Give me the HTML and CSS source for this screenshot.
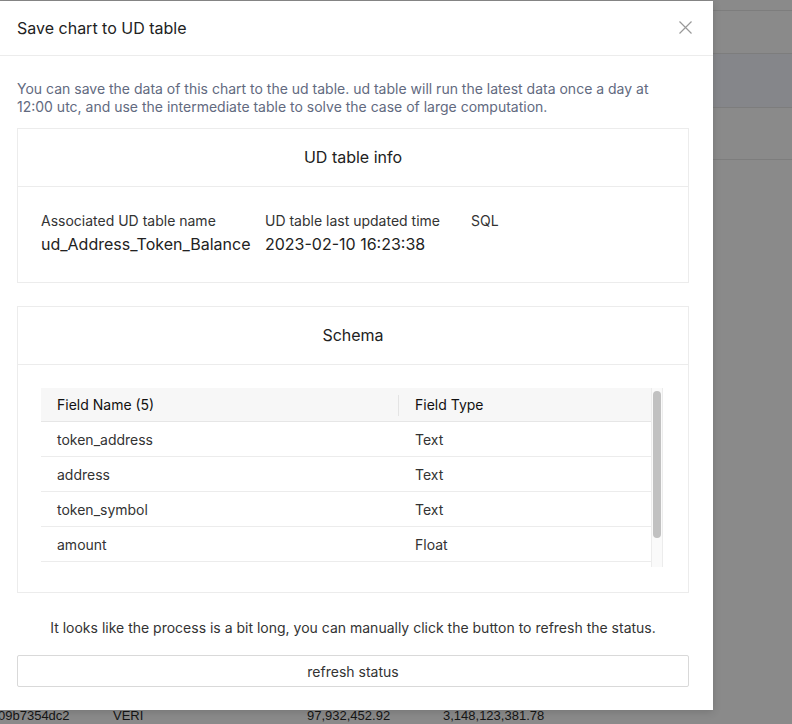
FILE: index.html
```html
<!DOCTYPE html>
<html lang="en">
  <head>
    <meta charset="UTF-8" />
    <meta name="viewport" content="width=device-width, initial-scale=1.0" />
    <title>Save chart to UD table</title>
    <link rel="stylesheet" href="styles.css">
  </head>
  <body>
    <!-- page behind the mask -->
    <div class="page">
      <div class="page-row row-top"></div>
      <div class="page-row row-a"></div>
      <div class="page-row row-b"></div>
      <div class="page-row row-c"></div>
      <div class="page-row row-fill"></div>
      <div class="page-row row-data">
        <span class="cell c1">09b7354dc2</span>
        <span class="cell c2">VERI</span>
        <span class="cell c3">97,932,452.92</span>
        <span class="cell c4">3,148,123,381.78</span>
      </div>
    </div>

    <div class="modal">
      <div class="modal-header">
        <span class="modal-title">Save chart to UD table</span>
        <svg class="close" width="13" height="13" viewBox="0 0 13 13">
          <path d="M0.5 0.5L12.5 12.5M12.5 0.5L0.5 12.5" stroke="#999" stroke-width="1.2" fill="none" />
        </svg>
      </div>

      <div class="modal-body">
        <p class="desc">
          You can save the data of this chart to the ud table. ud table will run the latest data once a day at
          12:00 utc, and use the intermediate table to solve the case of large computation.
        </p>

        <div class="card">
          <div class="card-head">UD table info</div>
          <div class="card-body info-grid">
            <div class="info-item">
              <div class="info-label">Associated UD table name</div>
              <div class="info-value">ud_Address_Token_Balance</div>
            </div>
            <div class="info-item">
              <div class="info-label">UD table last updated time</div>
              <div class="info-value">2023-02-10 16:23:38</div>
            </div>
            <div class="info-item">
              <div class="info-label">SQL</div>
            </div>
          </div>
        </div>

        <div class="card">
          <div class="card-head">Schema</div>
          <div class="card-body schema-body">
            <div class="table-wrap">
              <div class="table-clip">
                <table class="schema-table">
                  <thead>
                    <tr>
                      <th class="col-name">Field Name (5)</th>
                      <th>Field Type</th>
                    </tr>
                  </thead>
                  <tbody>
                    <tr><td>token_address</td><td>Text</td></tr>
                    <tr><td>address</td><td>Text</td></tr>
                    <tr><td>token_symbol</td><td>Text</td></tr>
                    <tr><td>amount</td><td>Float</td></tr>
                  </tbody>
                </table>
              </div>
              <div class="scrollbar">
                <div class="scroll-thumb"></div>
              </div>
            </div>
          </div>
        </div>

        <p class="hint">It looks like the process is a bit long, you can manually click the button to refresh the status.</p>
        <button class="refresh-btn">refresh status</button>
      </div>
    </div>
  </body>
</html>
```

FILE: styles.css
```css
/* General */
html, body {
  margin: 0;
  padding: 0;
  height: 100%;
}
body {
  font-family: Inter, "Liberation Sans", Arial, sans-serif;
  background-color: #8a8a8a;
  color: #222;
  overflow: hidden;
  position: relative;
}

/* Page behind the mask */
.page {
  display: flex;
  flex-direction: column;
  height: 724px;
}
.page-row {
  border-bottom: 1px solid #7d7d7d;
}
.row-top {
  height: 10px;
}
.row-a {
  height: 42px;
}
.row-b {
  height: 53px;
  background-color: #85868a;
}
.row-c {
  height: 51px;
}
.row-fill {
  flex: 1;
  border-bottom: none;
}
.row-data {
  height: 16px;
  border-bottom: none;
  display: flex;
  align-items: flex-start;
  font-family: "Liberation Sans", Arial, sans-serif;
  font-size: 13px;
  line-height: 16px;
  color: #151515;
}
.cell {
  white-space: nowrap;
}
.c1 {
  margin-left: -2px;
  width: 115px;
}
.c2 {
  width: 194px;
}
.c3 {
  width: 136px;
}

/* Modal */
.modal {
  position: absolute;
  left: 0;
  top: 1px;
  width: 713px;
  height: 709px;
  background-color: #fff;
  box-shadow: 0 2px 8px rgba(0, 0, 0, 0.15);
}
.modal-header {
  height: 54px;
  display: flex;
  align-items: center;
  justify-content: space-between;
  padding: 0 21px 0 17px;
  border-bottom: 1px solid #ececec;
}
.modal-title {
  font-size: 16px;
  color: #222;
}
.close {
  display: block;
  margin-top: -1px;
}
.modal-body {
  padding: 24px 24px 0 17px;
}
.desc {
  max-width: 645px;
  margin: 0 0 12px;
  font-size: 14px;
  line-height: 18px;
  color: #626a80;
}

/* Cards */
.card {
  border: 1px solid #ececec;
  margin-bottom: 23px;
}
.card-head {
  height: 57px;
  line-height: 57px;
  text-align: center;
  font-size: 16px;
  color: #222;
  border-bottom: 1px solid #ececec;
}
.info-grid {
  display: grid;
  grid-template-columns: 224px 206px auto;
  padding: 24px 23px 27px;
}
.info-label {
  font-size: 14px;
  line-height: 20px;
  color: #333;
}
.info-value {
  font-size: 16px;
  line-height: 22px;
  margin-top: 2px;
  color: #222;
}
.schema-body {
  padding: 23px 25px 25px 23px;
}

/* Schema table */
.table-wrap {
  display: flex;
  height: 179px;
}
.table-clip {
  flex: 1;
  overflow: hidden;
}
.scrollbar {
  width: 10px;
  padding: 3px 0 0 0;
  background-color: #fafafa;
  border-left: 1px solid #ececec;
  border-right: 1px solid #ececec;
}
.scroll-thumb {
  width: 8px;
  height: 147px;
  margin-left: 1px;
  border-radius: 4px;
  background-color: #c1c1c1;
}
.schema-table {
  width: 100%;
  border-collapse: collapse;
  font-size: 14px;
}
.schema-table th,
.schema-table td {
  text-align: left;
  padding: 0 16px;
  border-bottom: 1px solid #ececec;
}
.schema-table th {
  height: 33px;
  background-color: #f7f7f7;
  font-weight: normal;
  color: #111;
  border-bottom-color: #e6e6e6;
}
.schema-table th.col-name {
  width: 326px;
  position: relative;
}
.schema-table th.col-name::after {
  content: "";
  position: absolute;
  right: 0;
  top: 7px;
  height: 21px;
  border-right: 1px solid #e4e4e4;
}
.schema-table td {
  height: 34px;
  color: #333;
}

/* Footer */
.hint {
  margin: 25px 0 17px;
  text-align: center;
  font-size: 14px;
  line-height: 20px;
  color: #333;
}
.refresh-btn {
  display: block;
  width: 672px;
  height: 32px;
  padding: 0;
  font-family: inherit;
  font-size: 14px;
  color: #333;
  background-color: #fff;
  border: 1px solid #d9d9d9;
  border-radius: 2px;
}
```
